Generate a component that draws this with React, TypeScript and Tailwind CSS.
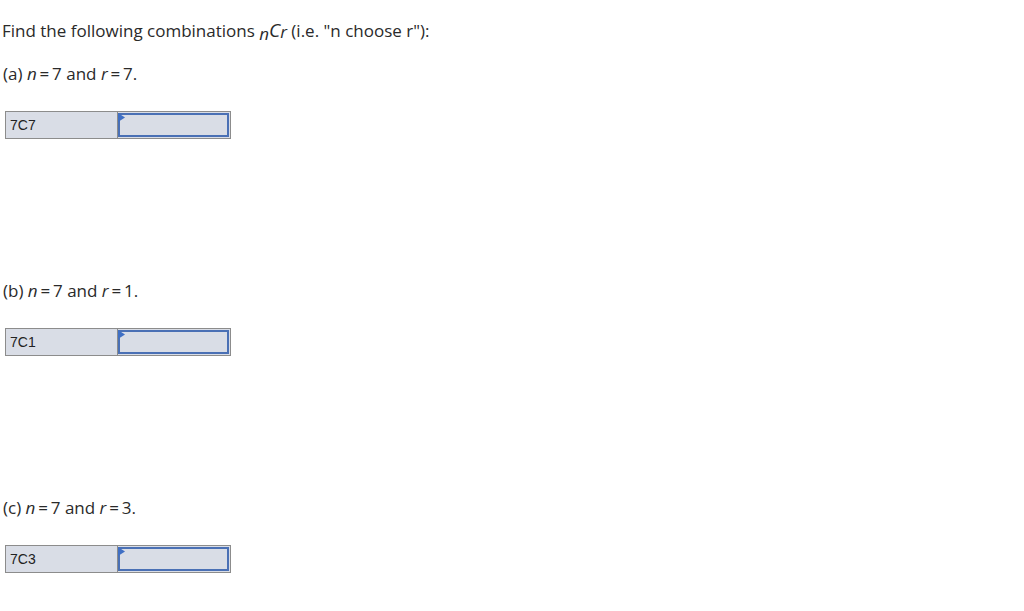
import React from 'react';

function AnswerRow({ label }: { label: string }) {
  return (
    <div className="flex w-[226px] h-[28px] border border-[#8c8c8c] bg-[#d9dde6] ml-[5px]">
      <div className="w-[112px] border-r border-[#8c8c8c] flex items-center pl-[4px] text-[14px] text-[#222] font-['Liberation_Sans',Arial,sans-serif]">
        {label}
      </div>
      <div className="relative flex-1 m-[1px] ml-0 border-2 border-[#4a70b5]">
        <svg className="absolute -left-[2px] -top-[2px]" width="8" height="10" viewBox="0 0 8 10">
          <polygon points="0,0 7,4.5 0,9" fill="#3f6fc4" />
        </svg>
      </div>
    </div>
  );
}

function Part({ letter, r, label, last }: { letter: string; r: string; label: string; last?: boolean }) {
  return (
    <div className={last ? '' : 'h-[217px]'}>
      <p className="pl-[3px] leading-[20px]">
        ({letter}) <i>n</i>&thinsp;=&thinsp;7 and <i>r</i>&thinsp;=&thinsp;{r}.
      </p>
      <div className="mt-[27px]">
        <AnswerRow label={label} />
      </div>
    </div>
  );
}

export default function App() {
  return (
    <div className="min-h-screen bg-white text-[17px] text-[#2a2a2a] font-['Open_Sans','Lato',sans-serif]">
      <div className="pt-[20px]">
        <p className="pl-[2px] leading-[20px]">
          Find the following combinations{' '}
          <i className="relative top-[3px]">n</i>
          <i className="text-[19px]">C</i>
          <i className="relative top-[1px]">r</i> (i.e. "n choose r"):
        </p>
        <div className="mt-[23px]">
          <Part letter="a" r="7" label="7C7" />
          <Part letter="b" r="1" label="7C1" />
          <Part letter="c" r="3" label="7C3" last />
        </div>
      </div>
    </div>
  );
}
